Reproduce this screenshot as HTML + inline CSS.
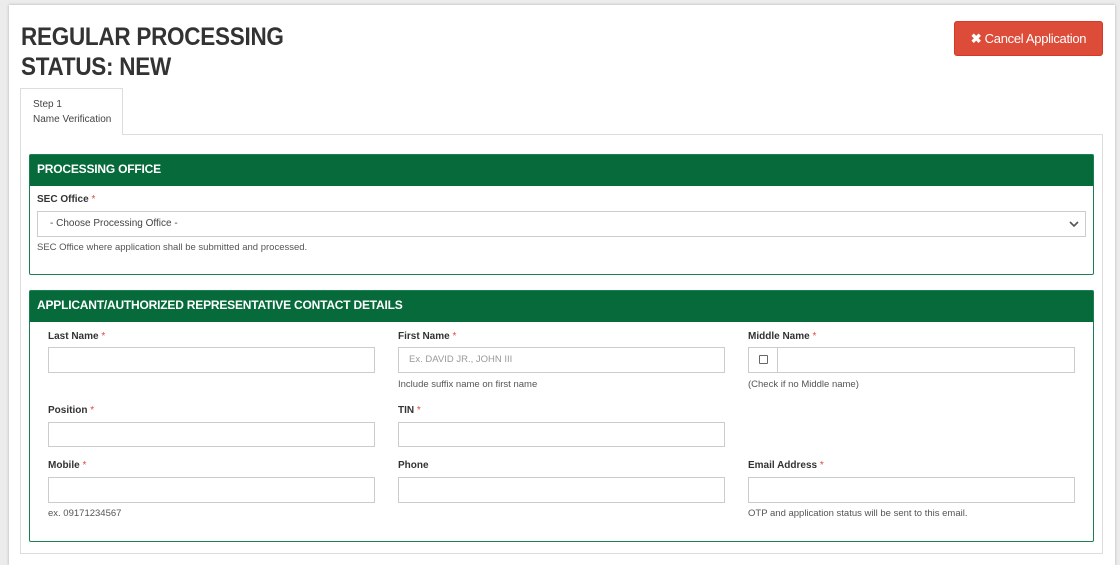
<!DOCTYPE html>
<html><head><style>
*{box-sizing:border-box;margin:0;padding:0}
body{width:1120px;height:544px;background:#ececec;font-family:"Liberation Sans",sans-serif;position:relative;overflow:hidden;color:#333}
.card{position:absolute;left:9px;top:5px;width:1106px;height:560px;background:#fff;box-shadow:0 0 3px rgba(0,0,0,.25)}
.a{position:absolute}
h1{position:absolute;left:21px;top:22px;font-size:25px;line-height:30px;font-weight:bold;color:#333;letter-spacing:-0.3px;transform:scaleX(0.9);transform-origin:left}
.btn{left:954px;top:21px;width:149px;height:35px;background:#dd4b39;border:1px solid #d73925;border-radius:3px;color:#fff;font-size:13px;line-height:33px;text-align:center;letter-spacing:-0.3px}
.tabbox{left:20px;top:134px;width:1083px;height:420px;border:1px solid #ddd}
.tab{left:20px;top:88px;width:103px;height:47px;border:1px solid #ddd;border-bottom:none;background:#fff;font-size:10px;line-height:15px;padding:8px 0 0 12px;color:#444}
.panel{border:1px solid #1a8052;border-radius:2px}
.ph{position:absolute;left:0;top:0;right:0;height:31px;background:#066a3b;color:#fff;font-weight:bold;font-size:12px;line-height:29px;padding-left:7px;letter-spacing:-0.2px}
.lbl{font-size:10px;font-weight:bold;color:#333}
.lbl i{color:#dd4b39;font-style:normal;font-weight:normal}
.inp{border:1px solid #ccc;background:#fff;height:26px}
.help{font-size:9.5px;color:#555}
</style></head><body>
<div class="card"></div>
<h1>REGULAR PROCESSING<br>STATUS: NEW</h1>
<div class="a btn"><b>✖</b> Cancel Application</div>
<div class="a tabbox"></div>
<div class="a tab">Step 1<br>Name Verification</div>

<div class="a panel" style="left:29px;top:154px;width:1065px;height:121px">
<div class="ph">PROCESSING OFFICE</div>
</div>
<div class="a lbl" style="left:37px;top:194px">SEC Office <i>*</i></div>
<div class="a inp" style="left:37px;top:211px;width:1049px;font-size:10px;line-height:24px;padding-left:12px;color:#444">- Choose Processing Office -
<svg style="position:absolute;right:6px;top:8px" width="10" height="8" viewBox="0 0 10 8"><path d="M1 2l4 4 4-4" stroke="#555" stroke-width="1.6" fill="none"/></svg></div>
<div class="a help" style="left:37px;top:242px">SEC Office where application shall be submitted and processed.</div>

<div class="a panel" style="left:29px;top:290px;width:1065px;height:252px">
<div class="ph">APPLICANT/AUTHORIZED REPRESENTATIVE CONTACT DETAILS</div>
</div>

<div class="a lbl" style="left:48px;top:331px">Last Name <i>*</i></div>
<div class="a inp" style="left:48px;top:347px;width:327px"></div>
<div class="a lbl" style="left:398px;top:331px">First Name <i>*</i></div>
<div class="a inp" style="left:398px;top:347px;width:327px;font-size:9.5px;line-height:24px;padding-left:10px;color:#999">Ex. DAVID JR., JOHN III</div>
<div class="a help" style="left:398px;top:379px">Include suffix name on first name</div>
<div class="a lbl" style="left:748px;top:331px">Middle Name <i>*</i></div>
<div class="a inp" style="left:748px;top:347px;width:327px"><div style="position:absolute;left:0;top:0;width:29px;height:24px;border-right:1px solid #ccc"></div><div style="position:absolute;left:10px;top:7px;width:9px;height:9px;border:1px solid #666;border-radius:1px"></div></div>
<div class="a help" style="left:748px;top:379px">(Check if no Middle name)</div>

<div class="a lbl" style="left:48px;top:405px">Position <i>*</i></div>
<div class="a inp" style="left:48px;top:422px;width:327px;height:25px"></div>
<div class="a lbl" style="left:398px;top:405px">TIN <i>*</i></div>
<div class="a inp" style="left:398px;top:422px;width:327px;height:25px"></div>

<div class="a lbl" style="left:48px;top:460px">Mobile <i>*</i></div>
<div class="a inp" style="left:48px;top:477px;width:327px"></div>
<div class="a help" style="left:48px;top:508px">ex. 09171234567</div>
<div class="a lbl" style="left:398px;top:460px">Phone</div>
<div class="a inp" style="left:398px;top:477px;width:327px"></div>
<div class="a lbl" style="left:748px;top:460px">Email Address <i>*</i></div>
<div class="a inp" style="left:748px;top:477px;width:327px"></div>
<div class="a help" style="left:748px;top:508px">OTP and application status will be sent to this email.</div>
</body></html>
